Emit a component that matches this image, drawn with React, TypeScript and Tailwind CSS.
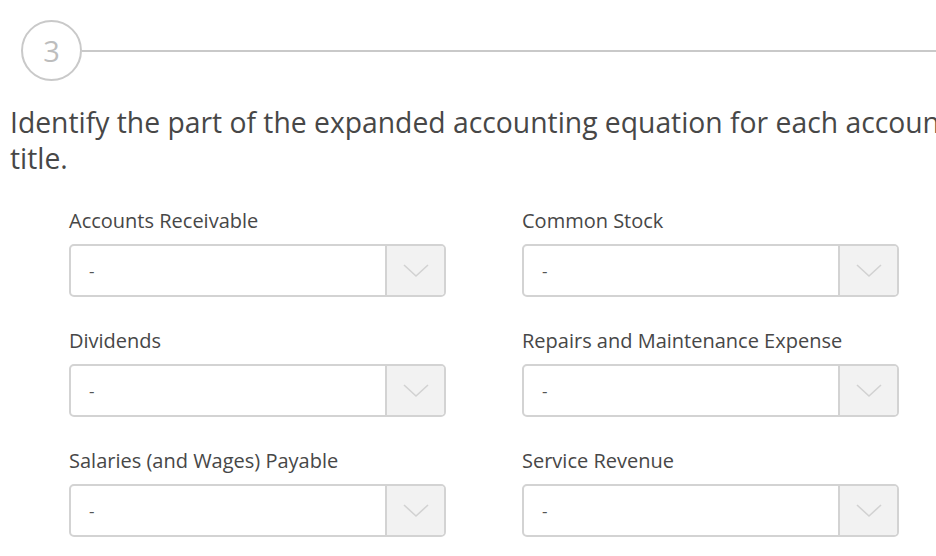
const fields = [
  "Accounts Receivable",
  "Common Stock",
  "Dividends",
  "Repairs and Maintenance Expense",
  "Salaries (and Wages) Payable",
  "Service Revenue",
];

const Chevron = () => (
  <svg width="26" height="14" viewBox="0 0 26 14" fill="none">
    <path d="M1 1L13 12L25 1" stroke="#d2d2d2" strokeWidth="1.6" />
  </svg>
);

const SelectBox = () => (
  <div className="flex h-[53px] w-[377px] rounded-[5px] border-2 border-[#d3d3d3] bg-white">
    <div className="flex flex-1 items-center pl-[18px] text-[17px] text-[#555]">-</div>
    <div className="flex w-[59px] items-center justify-center rounded-r-[3px] border-l-2 border-[#d3d3d3] bg-[#f2f2f2]">
      <Chevron />
    </div>
  </div>
);

export default function App() {
  return (
    <div
      className="h-[556px] w-[936px] overflow-hidden bg-white"
      style={{ fontFamily: '"Open Sans", "Liberation Sans", sans-serif' }}
    >
      <div className="flex items-center pl-[21px] pt-[20px]">
        <div className="flex h-[61px] w-[61px] shrink-0 items-center justify-center rounded-full border-2 border-[#c9c9c9] text-[29px] text-[#bdbdbd]">
          3
        </div>
        <div className="h-[2px] flex-1 bg-[#c9c9c9]" />
      </div>

      {/* wider than the window on purpose: the line runs off the right edge */}
      <p className="mt-[23px] w-[990px] pl-[10px] text-[28.3px] leading-[36px] text-[#474747]">
        Identify the part of the expanded accounting equation for each account title.
      </p>

      <div className="mt-[33px] grid grid-cols-[377px_377px] gap-x-[76px] gap-y-[32px] pl-[69px]">
        {fields.map(f => (
          <div key={f}>
            <div className="text-[20px] leading-[24px] text-[#474747]">{f}</div>
            <div className="mt-[11px]">
              <SelectBox />
            </div>
          </div>
        ))}
      </div>
    </div>
  );
}
